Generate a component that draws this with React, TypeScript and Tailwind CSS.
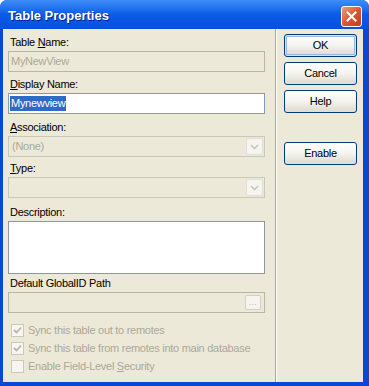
import React from 'react';

const font = "font-['Liberation_Sans',Arial,sans-serif]";

const Label = ({ children }: { children: React.ReactNode }) => (
  <div className="h-[13px] pl-[2px] text-[11px] leading-[13px] text-black">{children}</div>
);

const Key = ({ children }: { children: React.ReactNode }) => <span className="underline underline-offset-[1px]">{children}</span>;

const ComboArrow = () => (
  <div className="w-[17px] h-[17px] my-[1px] mr-[1px] rounded-[2px] bg-[#f5f4ef] border border-[#e2e0d6] flex items-center justify-center">
    <svg width="9" height="6" viewBox="0 0 9 6">
      <path d="M1 1 L4.5 4.5 L8 1" fill="none" stroke="#c9c7ba" strokeWidth="1.6" />
    </svg>
  </div>
);

const XpButton = ({ label, isDefault = false, className = '' }: { label: string; isDefault?: boolean; className?: string }) => (
  <div
    className={`w-[73px] h-[23px] rounded-[3px] border border-[#003c74] bg-gradient-to-b from-[#ffffff] via-[#f4f3ee] to-[#dcd8cc] flex items-center justify-center text-[11px] text-black ${
      isDefault ? 'shadow-[inset_0_0_0_1px_#cee7ff,inset_0_0_0_2px_#98b8ea]' : 'shadow-[inset_0_-2px_0_#e3dfd3]'
    } ${className}`}
  >
    {label}
  </div>
);

const Check = ({ checked, children }: { checked: boolean; children: React.ReactNode }) => (
  <div className="h-[13px] flex items-center gap-[4px] ml-[3px]">
    <div className="w-[13px] h-[13px] border border-[#cac8bb] bg-[#f6f5f0] flex items-center justify-center">
      {checked && (
        <svg width="9" height="9" viewBox="0 0 9 9">
          <path d="M1 4 L3.5 6.5 L8 1.5" fill="none" stroke="#b9b6a8" strokeWidth="1.8" />
        </svg>
      )}
    </div>
    <span className="text-[11px] leading-[13px] text-[#aca899]">{children}</span>
  </div>
);

export default function App() {
  return (
    <div className={`w-[369px] h-[386px] bg-white ${font}`}>
      <div className="w-[369px] h-[386px] flex flex-col rounded-t-[7px] bg-[#0a47d4] overflow-hidden">
        {/* title bar */}
        <div className="h-[29px] shrink-0 flex items-center justify-between pt-[3px] pl-[8px] pr-[7px] bg-gradient-to-b from-[#3d8ef9] via-[#0a5be6] to-[#0650dc]">
          <span className="text-white font-bold text-[13px] leading-[16px] [text-shadow:1px_1px_0_#0a1e8c]">Table Properties</span>
          <div className="w-[21px] h-[21px] rounded-[3px] border border-white bg-gradient-to-br from-[#ee9a7c] via-[#e0552f] to-[#c4391b] flex items-center justify-center">
            <svg width="11" height="11" viewBox="0 0 11 11">
              <path d="M1.5 1.5 L9.5 9.5 M9.5 1.5 L1.5 9.5" stroke="white" strokeWidth="2" strokeLinecap="square" />
            </svg>
          </div>
        </div>

        {/* client */}
        <div className="flex flex-1 ml-[3px] mr-[6px] mb-[4px] bg-[#ece9d8] tracking-[-0.28px]">
          <div className="w-[272px] pl-[5px] pr-[10px] pt-[7px] flex flex-col text-[11px]">
            <Label>Table <Key>N</Key>ame:</Label>
            <div className="mt-[2px] h-[21px] border border-[#b9b6a9] bg-[#ece9d8] flex items-center pl-[2px] text-[#aca899]">MyNewView</div>

            <div className="mt-[6px]"><Label><Key>D</Key>isplay Name:</Label></div>
            <div className="mt-[2px] h-[21px] border border-[#7f9db9] bg-white flex items-center pl-[1px]">
              <span className="bg-[#316ac5] text-white px-[1px] leading-[15px]">Mynewview</span>
            </div>

            <div className="mt-[7px]"><Label><Key>A</Key>ssociation:</Label></div>
            <div className="mt-[2px] h-[21px] border border-[#cbc8ba] bg-[#ece9d8] flex items-center justify-between pl-[3px] text-[#aca899]">
              <span>(None)</span>
              <ComboArrow />
            </div>

            <div className="mt-[5px]"><Label><Key>T</Key>ype:</Label></div>
            <div className="mt-[2px] h-[21px] border border-[#cbc8ba] bg-[#ece9d8] flex items-center justify-end">
              <ComboArrow />
            </div>

            <div className="mt-[8px]"><Label>Description:</Label></div>
            <div className="mt-[2px] h-[53px] border border-[#8c97a3] bg-white" />

            <div className="mt-[3px]"><Label>Default GlobalID Path</Label></div>
            <div className="mt-[2px] h-[21px] border border-[#b9b6a9] bg-[#ece9d8] flex items-center justify-end pr-[3px]">
              <div className="w-[16px] h-[15px] rounded-[2px] border border-[#d2cfc3] bg-[#f5f4ef] flex items-end justify-center pb-[3px]">
                <span className="text-[8px] leading-[6px] text-[#aca899] tracking-[0.5px]">...</span>
              </div>
            </div>

            <div className="mt-[11px] flex flex-col gap-[5px]">
              <Check checked>Sync this table out to remotes</Check>
              <Check checked>Sync this table from remotes into main database</Check>
              <Check checked={false}>Enable Field-Level <Key>S</Key>ecurity</Check>
            </div>
          </div>

          <div className="w-px bg-[#aca899]" />
          <div className="w-px bg-white" />

          <div className="flex-1 pl-[7px] pt-[5px] flex flex-col">
            <XpButton label="OK" isDefault />
            <XpButton label="Cancel" className="mt-[5px]" />
            <XpButton label="Help" className="mt-[5px]" />
            <XpButton label="Enable" className="mt-[29px]" />
          </div>
        </div>
      </div>
    </div>
  );
}
